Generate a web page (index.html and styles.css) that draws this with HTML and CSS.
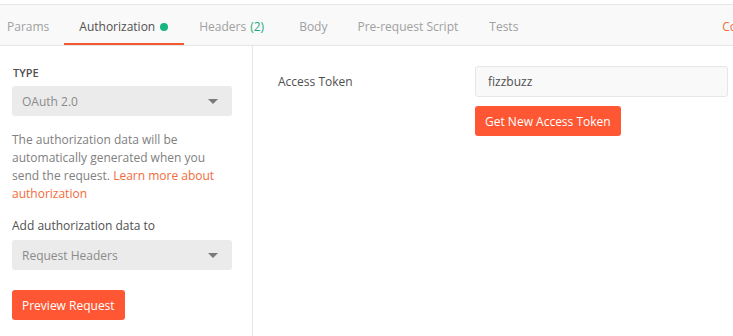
FILE: index.html
```html
<!DOCTYPE html>
<html>
<head>
<meta charset="utf-8">
<link rel="stylesheet" href="styles.css">
</head>
<body>
<div class="page">
  <div class="tabbar">
    <div class="tab">Params</div>
    <div class="tab active">Authorization <span class="dot"></span></div>
    <div class="tab wide">Headers <span class="count">(2)</span></div>
    <div class="tab narrow">Body</div>
    <div class="tab">Pre-request Script</div>
    <div class="tab">Tests</div>
    <div class="tab link">Cookies</div>
  </div>
  <div class="content">
    <div class="left">
      <div class="label">TYPE</div>
      <div class="select first">OAuth 2.0<span class="caret"></span></div>
      <p class="help">The authorization data will be automatically generated when you send the request. <span class="orange">Learn more about authorization</span></p>
      <div class="sublabel">Add authorization data to</div>
      <div class="select">Request Headers<span class="caret"></span></div>
      <div class="btn">Preview Request</div>
    </div>
    <div class="right">
      <div class="row">
        <div class="field-label">Access Token</div>
        <div class="field">
          <div class="input">fizzbuzz</div>
          <div class="btn">Get New Access Token</div>
        </div>
      </div>
    </div>
  </div>
</div>
</body>
</html>
```
FILE: styles.css
```css
* { box-sizing: border-box; }
html, body { margin: 0; padding: 0; background: #fff; }
body {
  font-family: "Open Sans", "Liberation Sans", sans-serif;
  font-size: 12px;
  color: #505050;
  width: 733px;
  height: 336px;
  overflow: hidden;
}
.page { padding-top: 4px; }
.tabbar {
  display: flex;
  align-items: stretch;
  height: 42px;
  background: #f9f9f9;
  border-top: 1px solid #e6e6e6;
  border-bottom: 1px solid #e6e6e6;
  white-space: nowrap;
  overflow: hidden;
}
.tab {
  display: flex;
  align-items: center;
  padding: 3px 16px 0 15px;
  color: #a0a0a0;
  font-size: 12px;
  position: relative;
  flex-shrink: 0;
}
.tab:first-child { padding-left: 7px; padding-right: 15px; }
.tab.wide { padding-right: 20px; }
.tab.narrow { padding-right: 15px; }
.tab.active { color: #505050; }
.tab.active::after {
  content: "";
  position: absolute;
  left: 0; right: 0; bottom: -1px;
  height: 3px;
  background: #f15a31;
}
.dot {
  display: inline-block;
  width: 8px; height: 8px;
  border-radius: 50%;
  background: #19b57f;
  margin-left: 5px;
}
.count { color: #1ea97c; margin-left: 4px; }
.tab.link { color: #f26b3a; padding-left: 0; padding-right: 0; margin-left: auto; margin-right: -33px; }
.content { display: flex; height: 290px; }
.left {
  width: 253px;
  border-right: 1px solid #e6e6e6;
  padding: 20px 20px 0 12px;
}
.label { font-size: 11px; font-weight: 600; color: #505050; line-height: 14px; margin-left: 1px; }
.select {
  height: 30px;
  background: #ebebeb;
  border-radius: 3px;
  display: flex;
  align-items: center;
  padding: 0 10px;
  color: #8a8a8a;
  position: relative;
}
.select.first { margin-top: 6px; }
.caret {
  position: absolute;
  right: 14px; top: 13px;
  border-left: 5px solid transparent;
  border-right: 5px solid transparent;
  border-top: 5px solid #7a7a7a;
}
.help { margin: 15px 0 0; line-height: 18px; color: #808080; }
.orange { color: #f26b3a; }
.sublabel { margin-top: 14px; color: #505050; line-height: 18px; }
.sublabel + .select { margin-top: 5px; }
.btn {
  display: inline-flex;
  align-items: center;
  height: 30px;
  padding: 0 10px;
  background: #ff5733;
  color: #fff;
  border-radius: 3px;
  margin-top: 20px;
}
.right { flex: 1; padding: 20px 0 0 25px; }
.row { display: flex; }
.field-label { width: 197px; line-height: 31px; color: #505050; }
.field { flex: 1; padding-right: 5px; }
.input {
  height: 31px;
  border: 1px solid #e6e6e6;
  border-radius: 3px;
  background: #f9f9f9;
  display: flex;
  align-items: center;
  padding: 0 12px;
  color: #505050;
}
.field .btn { margin-top: 9px; }
```
